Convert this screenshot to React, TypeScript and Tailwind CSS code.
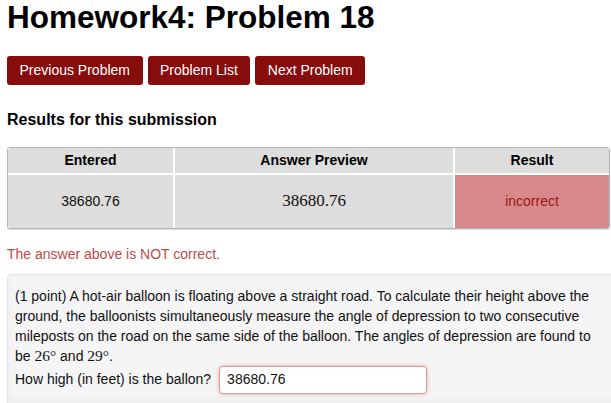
import React from "react";

const sans = { fontFamily: '"Liberation Sans", Arial, Helvetica, sans-serif' };
const serif = { fontFamily: '"Liberation Serif", "Times New Roman", Times, serif' };

export default function App() {
  return (
    <div className="w-[611px] h-[403px] overflow-hidden bg-white text-[#111]" style={sans}>
      <div className="pl-[7px]">
        <h1 className="mt-[2px] text-[31.5px] leading-none font-bold text-black">
          Homework4: Problem 18
        </h1>

        <div className="mt-[22px] flex gap-[5px]">
          {["Previous Problem", "Problem List", "Next Problem"].map((t) => (
            <button
              key={t}
              className="h-[29px] px-[12.5px] rounded-[3px] bg-[#870c0c] text-white text-[14px] leading-none"
              style={sans}
            >
              {t}
            </button>
          ))}
        </div>

        <h2 className="mt-[25px] text-[16px] leading-[20px] font-bold text-black">
          Results for this submission
        </h2>

        <div className="mt-[17px] w-[603px] border border-[#b4b4b4] rounded-[3px] bg-white overflow-hidden shadow-[0_1px_1px_rgba(0,0,0,0.15)]">
          <div className="grid grid-cols-[165px_278px_1fr] gap-[2px] bg-white">
            <div className="h-[25px] bg-[#dddddd] flex items-center justify-center text-[14px] font-bold text-black">
              Entered
            </div>
            <div className="h-[25px] bg-[#dddddd] flex items-center justify-center text-[14px] font-bold text-black">
              Answer Preview
            </div>
            <div className="h-[25px] bg-[#dddddd] flex items-center justify-center text-[14px] font-bold text-black">
              Result
            </div>
            <div className="h-[53px] bg-[#dddddd] flex items-center justify-center text-[14px]">
              38680.76
            </div>
            <div className="h-[53px] bg-[#dddddd] flex items-center justify-center">
              <span className="text-[17px] font-serif" style={serif}>
                38680.76
              </span>
            </div>
            <div className="h-[53px] bg-[#d88a8a] flex items-center justify-center text-[14px] text-[#9a1616]">
              incorrect
            </div>
          </div>
        </div>

        <div className="mt-[15px] text-[14px] leading-[20px] text-[#bf4a4a]">
          The answer above is NOT correct.
        </div>

        <div className="mt-[10px] w-[640px] border border-[#e3e3e3] rounded-[4px] bg-[#f5f5f5] pt-[11px] pl-[7px] pb-[12px] shadow-[inset_0_-6px_8px_rgba(0,0,0,0.04)]">
          <p className="w-[588px] text-[14px] leading-[20px] text-[#111]">
            (1 point) A hot-air balloon is floating above a straight road. To calculate their height above the
            ground, the balloonists simultaneously measure the angle of depression to two consecutive
            mileposts on the road on the same side of the balloon. The angles of depression are found to be{" "}
            <span className="text-[15.5px] font-serif" style={serif}>26°</span> and{" "}
            <span className="text-[15.5px] font-serif" style={serif}>29°</span>.
          </p>
          <div className="flex items-center gap-[8px] text-[14px]">
            <span>How high (in feet) is the ballon?</span>
            <div className="w-[208px] h-[28px] bg-white border border-[#d99a9a] rounded-[4px] shadow-[0_0_4px_rgba(190,80,80,0.4)] flex items-center pl-[7px] text-[14px] text-[#111]">
              38680.76
            </div>
          </div>
        </div>
      </div>
    </div>
  );
}
